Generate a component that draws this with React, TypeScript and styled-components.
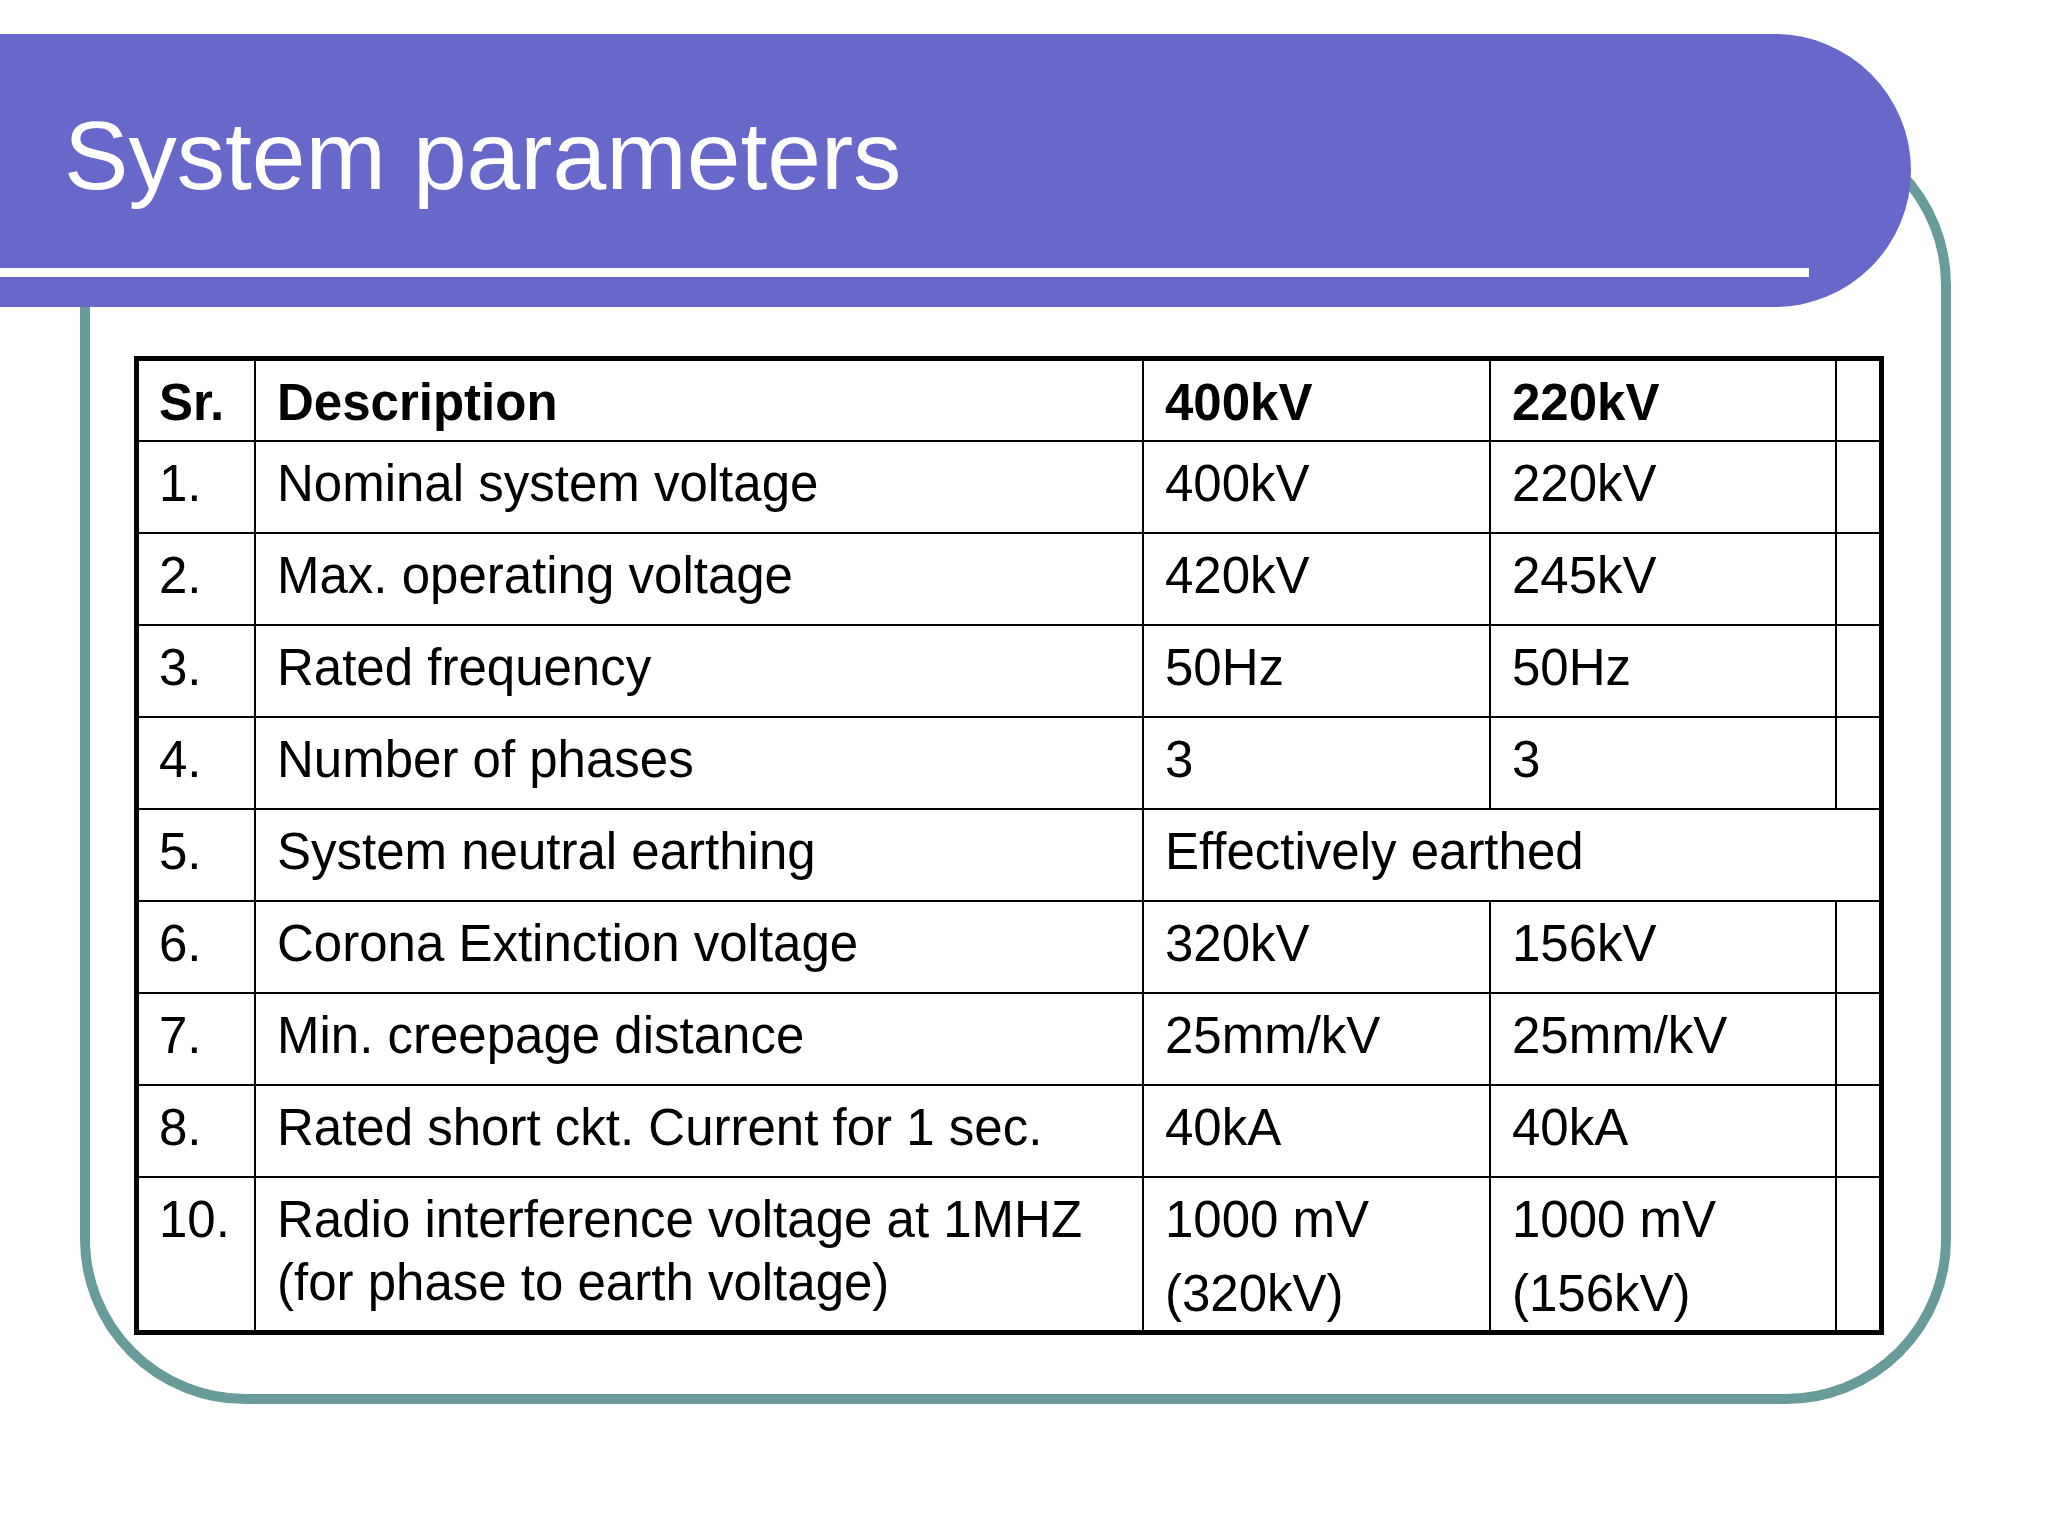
import styled, { createGlobalStyle } from "styled-components";

const GlobalStyle = createGlobalStyle`
  html, body {
    margin: 0;
    padding: 0;
    background: #ffffff;
  }
  body {
    font-family: "Liberation Sans", Arial, sans-serif;
    color: #000000;
  }
`;

const Slide = styled.div`
  width: 2048px;
  height: 1536px;
  box-sizing: border-box;
  padding-top: 34px;
  overflow: hidden;
  background: #ffffff;
`;

const TitleBar = styled.header`
  position: relative;
  z-index: 1;
  width: 1911px;
  height: 273px;
  box-sizing: border-box;
  padding-top: 74px;
  background: #6868ca;
  border-radius: 0 137px 137px 0 / 0 137px 137px 0;
`;

const Title = styled.h1`
  margin: 0 0 0 64px;
  font-family: "Liberation Sans", Arial, sans-serif;
  font-weight: 400;
  font-size: 96.6px;
  line-height: 96px;
  color: #ffffff;
  white-space: nowrap;
`;

const TitleRule = styled.div`
  margin-top: 64px;
  width: 1809px;
  height: 9px;
  background: #ffffff;
`;

const Frame = styled.main`
  margin: -187px 0 0 80px;
  width: 1871px;
  height: 1284px;
  box-sizing: border-box;
  padding: 226px 0 0 44px;
  border: 10px solid #689c9a;
  border-radius: 165px;
`;

const Table = styled.div`
  display: grid;
  grid-template-columns: 115px 888px 347px 346px 44px;
  grid-template-rows: 79px repeat(8, 92px) 154px;
  width: 1750px;
  box-sizing: border-box;
  border: 5px solid #000000;
`;

const Cell = styled.div<{ $head?: boolean; $first?: boolean; $span?: number }>`
  box-sizing: border-box;
  min-width: 0;
  border-top: ${(p) => (p.$head ? "none" : "2px solid #000000")};
  border-left: ${(p) => (p.$first ? "none" : "2px solid #000000")};
  grid-column: ${(p) => (p.$span ? `span ${p.$span}` : "auto")};
  padding: 12px 0 0 ${(p) => (p.$first ? "20px" : "21px")};
  font-size: 51px;
  line-height: 60px;
  font-weight: ${(p) => (p.$head ? 700 : 400)};
  white-space: nowrap;
`;

const Para = styled.div<{ $gap: number }>`
  margin-top: ${(p) => p.$gap}px;
`;

type Row = {
  sr: string;
  desc: string[];
  hv: string[];
  lv?: string[];
};

const rows: Row[] = [
  { sr: "1.", desc: ["Nominal system voltage"], hv: ["400kV"], lv: ["220kV"] },
  { sr: "2.", desc: ["Max. operating voltage"], hv: ["420kV"], lv: ["245kV"] },
  { sr: "3.", desc: ["Rated frequency"], hv: ["50Hz"], lv: ["50Hz"] },
  { sr: "4.", desc: ["Number of phases"], hv: ["3"], lv: ["3"] },
  { sr: "5.", desc: ["System neutral earthing"], hv: ["Effectively earthed"] },
  { sr: "6.", desc: ["Corona Extinction voltage"], hv: ["320kV"], lv: ["156kV"] },
  { sr: "7.", desc: ["Min. creepage distance"], hv: ["25mm/kV"], lv: ["25mm/kV"] },
  { sr: "8.", desc: ["Rated short ckt. Current for 1 sec."], hv: ["40kA"], lv: ["40kA"] },
  {
    sr: "10.",
    desc: ["Radio interference voltage at 1MHZ", "(for phase to earth voltage)"],
    hv: ["1000 mV", "(320kV)"],
    lv: ["1000 mV", "(156kV)"],
  },
];

// description lines wrap tight, value cells are separate paragraphs
function Lines({ lines, gap }: { lines: string[]; gap: number }) {
  return (
    <>
      {lines.map((l, i) => (
        <Para key={l} $gap={i > 0 ? gap : 0}>
          {l}
        </Para>
      ))}
    </>
  );
}

export default function App() {
  return (
    <Slide>
      <GlobalStyle />
      <TitleBar>
        <Title>System parameters</Title>
        <TitleRule />
      </TitleBar>
      <Frame>
        <Table>
          <Cell $head $first>Sr.</Cell>
          <Cell $head>Description</Cell>
          <Cell $head>400kV</Cell>
          <Cell $head>220kV</Cell>
          <Cell $head />
          {rows.map((r) => [
            <Cell key={r.sr + "a"} $first>{r.sr}</Cell>,
            <Cell key={r.sr + "b"}>
              <Lines lines={r.desc} gap={3} />
            </Cell>,
            r.lv ? (
              [
                <Cell key={r.sr + "c"}>
                  <Lines lines={r.hv} gap={14} />
                </Cell>,
                <Cell key={r.sr + "d"}>
                  <Lines lines={r.lv} gap={14} />
                </Cell>,
                <Cell key={r.sr + "e"} />,
              ]
            ) : (
              <Cell key={r.sr + "c"} $span={3}>
                {r.hv[0]}
              </Cell>
            ),
          ])}
        </Table>
      </Frame>
    </Slide>
  );
}
